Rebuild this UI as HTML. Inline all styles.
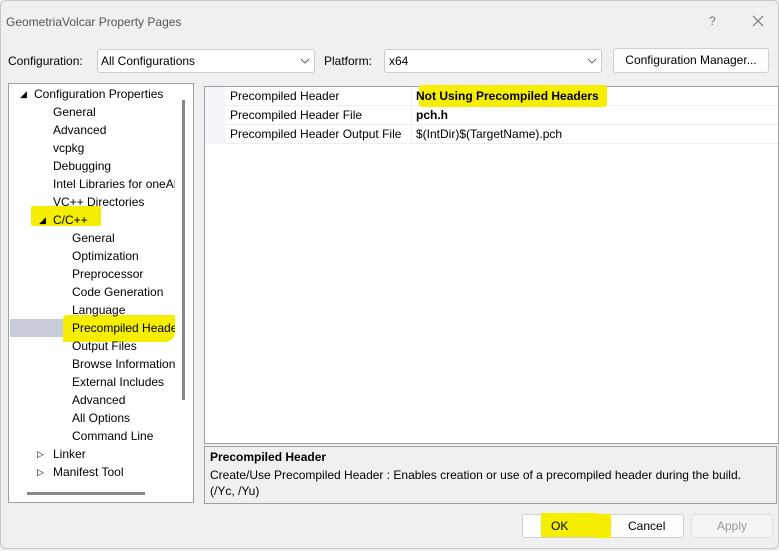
<html><head><style>
body{margin:0;width:779px;height:551px;background:#f0f0f0;font-family:"Liberation Sans",sans-serif;font-size:12px;color:#000;position:relative;overflow:hidden}
.a{position:absolute;white-space:nowrap}
.t{position:absolute;white-space:nowrap;line-height:18px;height:18px}
.btn{position:absolute;background:#fdfdfd;border:1px solid #d0d0d0;border-radius:3px;text-align:center;line-height:22px}
.y{background:#f5ee00}
</style></head><body>
<div class="a" style="left:0;top:0;width:779px;height:549px;border:1px solid #c8c8c8;border-radius:6px;box-sizing:border-box"></div>
<div class="a" style="left:6px;top:15px;color:#555">GeometriaVolcar Property Pages</div>
<div class="a" style="left:709px;top:14px;color:#777">?</div>
<svg class="a" style="left:752px;top:15px" width="12" height="12"><path d="M1 1L11 11M11 1L1 11" stroke="#777" stroke-width="1.2"/></svg>

<div class="a" style="left:8px;top:54px">Configuration:</div>
<div class="a" style="left:97px;top:49px;width:216px;height:22px;background:#fff;border:1px solid #ccc;border-radius:3px"></div>
<div class="a" style="left:101px;top:54px">All Configurations</div>
<svg class="a" style="left:300px;top:58px" width="10" height="6"><path d="M1 1L5 5L9 1" stroke="#666" fill="none"/></svg>
<div class="a" style="left:324px;top:54px">Platform:</div>
<div class="a" style="left:384px;top:49px;width:216px;height:22px;background:#fff;border:1px solid #ccc;border-radius:3px"></div>
<div class="a" style="left:389px;top:54px">x64</div>
<svg class="a" style="left:587px;top:58px" width="10" height="6"><path d="M1 1L5 5L9 1" stroke="#666" fill="none"/></svg>
<div class="btn" style="left:613px;top:48px;width:154px;height:23px">Configuration Manager...</div>

<div class="a" style="left:8px;top:83px;width:186px;height:420px;background:#fff;border:1px solid #a0a0a0;box-sizing:border-box"></div>
<div class="a" style="left:182px;top:100px;width:3px;height:300px;background:#888"></div>
<div class="a" style="left:27px;top:492px;width:118px;height:3px;background:#888"></div>
<div class="a" style="left:10px;top:319px;width:54px;height:18px;background:#c8ccd8"></div>
<div class="a y" style="left:31px;top:206px;width:70px;height:20px;border-radius:2px"></div>
<div class="a y" style="left:63px;top:315px;width:112px;height:27px;border-radius:4px 0 10px 0"></div>
<div class="t" style="left:20px;top:85px;font-size:9px">◢</div>
<div class="t" style="left:34px;top:85px">Configuration Properties</div>
<div class="t" style="left:53px;top:103px">General</div>
<div class="t" style="left:53px;top:121px">Advanced</div>
<div class="t" style="left:53px;top:139px">vcpkg</div>
<div class="t" style="left:53px;top:157px">Debugging</div>
<div class="t" style="left:53px;top:175px;width:122px;overflow:hidden">Intel Libraries for oneAPI</div>
<div class="t" style="left:53px;top:193px">VC++ Directories</div>
<div class="t" style="left:39px;top:211px;font-size:9px">◢</div>
<div class="t" style="left:53px;top:211px">C/C++</div>
<div class="t" style="left:72px;top:229px">General</div>
<div class="t" style="left:72px;top:247px">Optimization</div>
<div class="t" style="left:72px;top:265px">Preprocessor</div>
<div class="t" style="left:72px;top:283px">Code Generation</div>
<div class="t" style="left:72px;top:301px">Language</div>
<div class="t" style="left:72px;top:319px;width:103px;overflow:hidden">Precompiled Header</div>
<div class="t" style="left:72px;top:337px">Output Files</div>
<div class="t" style="left:72px;top:355px;width:103px;overflow:hidden">Browse Information</div>
<div class="t" style="left:72px;top:373px">External Includes</div>
<div class="t" style="left:72px;top:391px">Advanced</div>
<div class="t" style="left:72px;top:409px">All Options</div>
<div class="t" style="left:72px;top:427px">Command Line</div>
<div class="t" style="left:37px;top:445px;font-size:9px">▷</div>
<div class="t" style="left:53px;top:445px">Linker</div>
<div class="t" style="left:37px;top:463px;font-size:9px">▷</div>
<div class="t" style="left:53px;top:463px">Manifest Tool</div>

<div class="a" style="left:204px;top:86px;width:575px;height:358px;background:#fff;border:1px solid #a0a0a0;box-sizing:border-box"></div>
<div class="a" style="left:205px;top:87px;width:20px;height:57px;background:#f3f5fa"></div>
<div class="a" style="left:225px;top:105px;width:553px;height:1px;background:#eee"></div>
<div class="a" style="left:225px;top:124px;width:553px;height:1px;background:#eee"></div>
<div class="a" style="left:225px;top:143px;width:553px;height:1px;background:#eee"></div>
<div class="a" style="left:411px;top:87px;width:1px;height:57px;background:#eee"></div>
<div class="a y" style="left:419px;top:85px;width:188px;height:22px;border-radius:3px"></div>
<div class="t" style="left:230px;top:87px">Precompiled Header</div>
<div class="t" style="left:230px;top:106px">Precompiled Header File</div>
<div class="t" style="left:230px;top:125px">Precompiled Header Output File</div>
<div class="t" style="left:416px;top:87px;font-weight:bold">Not Using Precompiled Headers</div>
<div class="t" style="left:416px;top:106px;font-weight:bold">pch.h</div>
<div class="t" style="left:416px;top:125px">$(IntDir)$(TargetName).pch</div>

<div class="a" style="left:204px;top:446px;width:573px;height:58px;border:1px solid #a0a0a0;box-sizing:border-box"></div>
<div class="a" style="left:210px;top:450px;font-weight:bold">Precompiled Header</div>
<div class="a" style="left:210px;top:468px">Create/Use Precompiled Header : Enables creation or use of a precompiled header during the build.</div>
<div class="a" style="left:210px;top:484px">(/Yc, /Yu)</div>

<div class="btn" style="left:522px;top:514px;width:76px;height:22px"></div>
<div class="a y" style="left:541px;top:513px;width:56px;height:24px"></div>
<div class="btn" style="left:599px;top:514px;width:83px;height:22px"></div>
<div class="a y" style="left:595px;top:514px;width:16px;height:24px"></div>
<div class="a" style="left:551px;top:519px">OK</div>
<div class="a" style="left:628px;top:519px">Cancel</div>
<div class="btn" style="left:691px;top:514px;width:80px;height:22px;background:#f5f5f5;border-color:#e0e0e0;color:#999">Apply</div>
</body></html>
